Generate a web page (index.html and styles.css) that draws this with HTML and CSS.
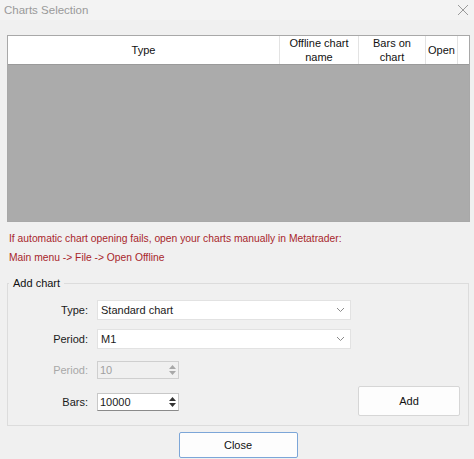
FILE: index.html
```html
<!DOCTYPE html>
<html lang="en">
<head>
  <meta charset="UTF-8" />
  <title>Charts Selection</title>
  <link rel="stylesheet" href="styles.css">
</head>
<body>
  <div class="window">
    <div class="titlebar">
      <span class="title">Charts Selection</span>
      <svg class="close-x" width="12" height="12" viewBox="0 0 12 12">
        <path d="M1 1 L11 11 M11 1 L1 11" stroke="#9a9a9a" stroke-width="1" fill="none"/>
      </svg>
    </div>

    <div class="grid">
      <div class="grid-head">
        <div class="col col-type">Type</div>
        <div class="col col-name">Offline chart<br>name</div>
        <div class="col col-bars">Bars on<br>chart</div>
        <div class="col col-open">Open</div>
        <div class="col col-rest"></div>
      </div>
      <div class="grid-body"></div>
    </div>

    <div class="notice">
      <div>If automatic chart opening fails, open your charts manually in Metatrader:</div>
      <div>Main menu -&gt; File -&gt; Open Offline</div>
    </div>

    <fieldset class="group">
      <legend>Add chart</legend>
      <div class="group-inner">
        <div class="rows">
          <div class="row">
            <label>Type:</label>
            <div class="combo">
              <span>Standard chart</span>
              <svg width="9" height="6" viewBox="0 0 9 6"><path d="M1 1 L4.5 4.5 L8 1" stroke="#8a8a8a" fill="none"/></svg>
            </div>
          </div>
          <div class="row">
            <label>Period:</label>
            <div class="combo">
              <span>M1</span>
              <svg width="9" height="6" viewBox="0 0 9 6"><path d="M1 1 L4.5 4.5 L8 1" stroke="#8a8a8a" fill="none"/></svg>
            </div>
          </div>
          <div class="row row-disabled">
            <label>Period:</label>
            <div class="spin spin-disabled">
              <span>10</span>
              <div class="arrows">
                <svg width="7" height="4" viewBox="0 0 7 4"><path d="M0 4 L3.5 0 L7 4 Z" fill="#a8a8a8"/></svg>
                <svg width="7" height="4" viewBox="0 0 7 4"><path d="M0 0 L3.5 4 L7 0 Z" fill="#a8a8a8"/></svg>
              </div>
            </div>
          </div>
          <div class="row row-bars">
            <label>Bars:</label>
            <div class="spin">
              <span>10000</span>
              <div class="arrows">
                <svg width="7" height="4" viewBox="0 0 7 4"><path d="M0 4 L3.5 0 L7 4 Z" fill="#333"/></svg>
                <svg width="7" height="4" viewBox="0 0 7 4"><path d="M0 0 L3.5 4 L7 0 Z" fill="#333"/></svg>
              </div>
            </div>
          </div>
        </div>
        <button class="btn btn-add">Add</button>
      </div>
    </fieldset>

    <div class="footer">
      <button class="btn btn-close">Close</button>
    </div>
  </div>
</body>
</html>
```

FILE: styles.css
```css
html, body {
  margin: 0;
  padding: 0;
  background: #f0f0f0;
  font-family: "Liberation Sans", Arial, sans-serif;
  font-size: 11px;
  color: #1a1a1a;
}

.window {
  width: 474px;
  height: 459px;
  overflow: hidden;
}

.titlebar {
  height: 20px;
  display: flex;
  align-items: center;
  justify-content: space-between;
  padding: 0 5px 0 4px;
  background: #f3f3f3;
}

.title {
  color: #9a9a9a;
  font-size: 11.5px;
}

.grid {
  margin: 15px 4px 0 7px;
  height: 185px;
  border: 1px solid #a8a8a8;
  display: flex;
  flex-direction: column;
}

.grid-head {
  height: 28px;
  display: flex;
  background: #fff;
  border-bottom: 1px solid #9a9a9a;
}

.col {
  display: flex;
  align-items: center;
  justify-content: center;
  text-align: center;
  line-height: 14px;
  border-right: 1px solid #e3e3e3;
  color: #111;
  font-size: 11px;
}

.col-type { width: 271px; }
.col-name { width: 78px; }
.col-bars { width: 66px; }
.col-open { width: 31px; }
.col-rest { flex: 1; border-right: none; }

.grid-body {
  flex: 1;
  background: #ababab;
}

.notice {
  margin: 7px 0 0 9px;
  color: #a8262b;
  font-size: 10.3px;
  line-height: 19px;
}

.group {
  margin: 10px 5px 0 7px;
  padding: 11px 8px 9px 0;
  border: 1px solid #dcdcdc;
  border-radius: 0;
  min-width: 0;
}

.group legend {
  padding: 0 4px;
  margin-left: 1px;
  color: #111;
}

.group-inner {
  display: flex;
  justify-content: space-between;
  align-items: flex-end;
}

.rows {
  display: flex;
  flex-direction: column;
  gap: 9px;
  padding-bottom: 5px;
}

.row {
  display: flex;
  align-items: center;
  gap: 9px;
}

.row-disabled { margin-top: 3px; }
.row-bars { margin-top: 5px; }

.row label {
  width: 80px;
  text-align: right;
}

.row-disabled label {
  color: #a8a8a8;
}

.combo {
  width: 244px;
  height: 18px;
  background: #fff;
  border: 1px solid #e2e2e2;
  display: flex;
  align-items: center;
  justify-content: space-between;
  padding: 0 5px 0 3px;
  box-sizing: content-box;
}

.spin {
  width: 76px;
  height: 16px;
  background: #fff;
  border: 1px solid #c8c8c8;
  border-bottom-color: #8a8a8a;
  display: flex;
  align-items: center;
  justify-content: space-between;
  padding: 0 2px 0 2px;
  box-sizing: content-box;
}

.spin-disabled {
  background: #f0f0f0;
  border-color: #cfcfcf;
  color: #a0a0a0;
}

.arrows {
  display: flex;
  flex-direction: column;
  gap: 2px;
}

.arrows svg { display: block; }

.btn {
  font-family: "Liberation Sans", Arial, sans-serif;
  font-size: 11px;
  color: #111;
  background: #fdfdfd;
  border: 1px solid #d6d6d6;
  border-radius: 2px;
  padding: 0;
}

.btn-add {
  width: 102px;
  height: 30px;
}

.footer {
  display: flex;
  justify-content: center;
  margin-top: 6px;
  padding-left: 2px;
}

.btn-close {
  width: 119px;
  height: 26px;
  border: 1px solid #7ca6d8;
  background: #fdfdfd;
}
```
